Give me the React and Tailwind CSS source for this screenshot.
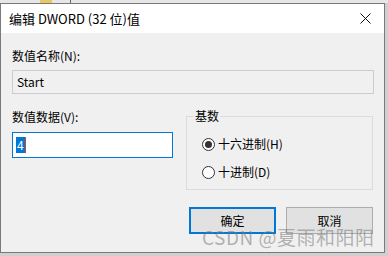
export default function App() {
  const font = { fontFamily: '"Noto Sans CJK SC", "Noto Sans", sans-serif' };
  return (
    <div className="relative w-[388px] h-[256px] bg-[#cfcfcf] overflow-hidden" style={font}>
      <div className="h-[3px] bg-[#e6e6e6] flex">
        <div className="w-[40px]" />
        <div className="w-[12px] bg-[#e8c766]" />
        <div className="w-[18px]" />
        <div className="w-[1px] bg-[#666]" />
      </div>
      <div className="w-[385px] h-[250px] border border-[#7a7a7a] bg-[#f0f0f0] flex flex-col">
        <div className="h-[29px] bg-white flex items-center justify-between pl-[8px] pr-[13px] shrink-0">
          <span className="text-[13px] leading-[16px] text-black">编辑 DWORD (32 位)值</span>
          <svg width="11" height="11" viewBox="0 0 11 11">
            <path d="M0.5 0.5 L10.5 10.5 M10.5 0.5 L0.5 10.5" stroke="#111" strokeWidth="1" fill="none" />
          </svg>
        </div>
        <div className="px-[11px] flex flex-col">
          <div className="mt-[15px] text-[12px] leading-[16px] text-black">数值名称(N):</div>
          <div className="mt-[6px] h-[24px] w-[362px] border border-[#cccccc] bg-[#f0f0f0] flex items-center px-[4px] text-[12px] leading-[16px] text-black">
            Start
          </div>
          <div className="flex gap-[13px]">
            <div className="w-[162px] flex flex-col">
              <div className="mt-[15px] text-[12px] leading-[16px] text-black">数值数据(V):</div>
              <div className="mt-[7px] h-[26px] border-[1.5px] border-[#0078d7] bg-white flex items-center pl-[3px]">
                <span className="bg-[#0078d7] text-white text-[12px] leading-[16px] px-[1px]">4</span>
                <span className="w-[1px] h-[16px] bg-[#c05020]" />
              </div>
            </div>
            <div className="relative w-[188px] h-[74px] mt-[22px] border border-[#dcdcdc]">
              <span className="absolute left-[7px] top-[-9px] bg-[#f0f0f0] px-[1px] text-[12px] leading-[16px] text-black">基数</span>
              <div className="flex flex-col gap-[12px] pl-[15px] pt-[19px]">
                <div className="flex items-center gap-[3px]">
                  <span className="w-[13px] h-[13px] rounded-full border border-[#333] bg-white flex items-center justify-center">
                    <span className="w-[7px] h-[7px] rounded-full bg-[#333]" />
                  </span>
                  <span className="text-[12px] leading-[16px] text-black">十六进制(H)</span>
                </div>
                <div className="flex items-center gap-[3px]">
                  <span className="w-[13px] h-[13px] rounded-full border border-[#333] bg-white" />
                  <span className="text-[12px] leading-[16px] text-black">十进制(D)</span>
                </div>
              </div>
            </div>
          </div>
          <div className="flex justify-end gap-[10px] mt-[17px]">
            <div className="w-[87px] h-[27px] border-2 border-[#0078d7] bg-[#e1e1e1] flex items-center justify-center text-[12px] leading-[16px] text-black">确定</div>
            <div className="w-[87px] h-[27px] border border-[#adadad] bg-[#e1e1e1] flex items-center justify-center text-[12px] leading-[16px] text-black">取消</div>
          </div>
        </div>
      </div>
      <div className="absolute left-[202px] top-[226px] text-[19px] leading-[22px] tracking-[0.5px] text-[rgba(120,120,120,0.55)]">CSDN @夏雨和阳阳</div>
    </div>
  );
}
